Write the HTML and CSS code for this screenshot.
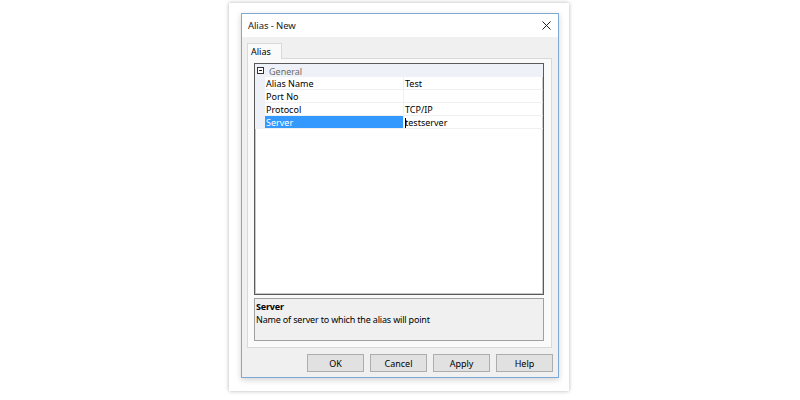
FILE: index.html
```html
<!DOCTYPE html>
<html>
<head>
<meta charset="utf-8">
<link rel="stylesheet" href="styles.css">
</head>
<body>
<div class="card">
  <div class="dialog">
    <div class="titlebar">
      <span class="title">Alias - New</span>
      <svg class="close" width="9" height="9" viewBox="0 0 9 9"><path d="M0.5 0.5 L8.5 8.5 M8.5 0.5 L0.5 8.5" stroke="#222" stroke-width="1" fill="none"/></svg>
    </div>
    <div class="body">
      <div class="tabs"><div class="tab">Alias</div></div>
      <div class="panel">
        <div class="grid">
          <div class="cat">
            <span class="toggle"><span class="minus"></span></span>
            <span class="catname">General</span>
          </div>
          <div class="row"><div class="gut"></div><div class="name">Alias Name</div><div class="val">Test</div></div>
          <div class="row"><div class="gut"></div><div class="name">Port No</div><div class="val"></div></div>
          <div class="row"><div class="gut"></div><div class="name">Protocol</div><div class="val">TCP/IP</div></div>
          <div class="row"><div class="gut"></div><div class="name sel">Server</div><div class="val"><span class="caret"></span>testserver</div></div>
        </div>
        <div class="desc">
          <div class="dtitle">Server</div>
          <div class="dtext">Name of server to which the alias will point</div>
        </div>
      </div>
      <div class="buttons">
        <button class="btn">OK</button>
        <button class="btn">Cancel</button>
        <button class="btn">Apply</button>
        <button class="btn">Help</button>
      </div>
    </div>
  </div>
</div>
</body>
</html>
```

FILE: styles.css
```css
html, body {
  margin: 0;
  padding: 0;
  background: #ffffff;
  width: 800px;
  height: 400px;
  overflow: hidden;
  font-family: "Noto Sans", "Open Sans", sans-serif;
  font-size: 9px;
  color: #000;
}
body {
  padding-top: 3px;
  box-sizing: border-box;
}
.card {
  margin-left: 229px;
  width: 340px;
  height: 388px;
  background: #ffffff;
  box-shadow: 0 0 4px rgba(0,0,0,0.3);
  padding: 10px 0 0 12px;
  box-sizing: border-box;
}
.dialog {
  width: 318px;
  height: 365px;
  box-sizing: border-box;
  border: 1px solid #7ea9d4;
  background: #f0f0f0;
  box-shadow: 0 2px 6px rgba(0,0,0,0.18);
  display: flex;
  flex-direction: column;
}
.titlebar {
  height: 23px;
  background: #ffffff;
  display: flex;
  align-items: center;
  justify-content: space-between;
  padding: 0 7px 0 6px;
}
.title {
  font-size: 9.5px;
  letter-spacing: -0.1px;
  color: #222;
}
.close {
  display: block;
}
.body {
  flex: 1;
  display: flex;
  flex-direction: column;
  padding: 6px 6px 5px 5px;
}
.tabs {
  display: flex;
  height: 15px;
}
.tab {
  width: 35px;
  height: 16px;
  box-sizing: border-box;
  border: 1px solid #d9d9d9;
  border-bottom: none;
  background: #fafafa;
  padding: 1px 0 0 3px;
  font-size: 9px;
  position: relative;
  z-index: 1;
}
.panel {
  height: 290px;
  box-sizing: border-box;
  border: 1px solid #d9d9d9;
  background: #fafafa;
  padding: 4px 7px 6px 6px;
  display: flex;
  flex-direction: column;
  gap: 3px;
}
.grid {
  height: 232px;
  box-sizing: border-box;
  border: 1px solid #5a5a5a;
  background: #ffffff;
  box-shadow: inset 0 0 0 1px #c8c8c8;
}
.cat {
  height: 13px;
  box-sizing: border-box;
  display: flex;
  align-items: center;
  background: #eef2f8;
  padding: 1px 0 0 2px;
}
.toggle {
  width: 7px;
  height: 7px;
  box-sizing: border-box;
  border: 1px solid #333;
  display: flex;
  align-items: center;
  justify-content: center;
  background: #fff;
  margin-top: -1px;
}
.minus {
  width: 3px;
  height: 1px;
  background: #222;
}
.catname {
  margin-left: 5px;
  color: #6a6a6a;
}
.row {
  height: 13px;
  display: flex;
  border-bottom: 1px solid #f0f0f0;
  box-sizing: border-box;
}
.gut {
  width: 10px;
  background: #eef2f8;
}
.name {
  width: 137px;
  padding: 2px 0 0 1px;
  line-height: 10px;
  border-right: 1px solid #f0f0f0;
  box-sizing: content-box;
}
.name.sel {
  background: #3399ff;
  color: #ffffff;
}
.val {
  flex: 1;
  padding: 2px 0 0 1px;
  line-height: 10px;
  white-space: nowrap;
}
.caret {
  display: inline-block;
  width: 1px;
  height: 10px;
  background: #000;
  margin-right: -1px;
  vertical-align: -2px;
}
.desc {
  height: 43px;
  box-sizing: border-box;
  border: 1px solid #a0a0a0;
  background: #f0f0f0;
  padding: 1px 2px 1px 1px;
  line-height: 13px;
  letter-spacing: -0.18px;
}
.dtitle {
  font-weight: bold;
}
.buttons {
  margin-top: 6px;
  display: flex;
  justify-content: flex-end;
  gap: 6px;
  margin-right: -1px;
}
.btn {
  width: 57px;
  height: 18px;
  box-sizing: border-box;
  border: 1px solid #adadad;
  background: #e1e1e1;
  font-family: "Noto Sans", "Open Sans", sans-serif;
  font-size: 9px;
  color: #000;
  padding: 0;
  margin: 0;
}
```
